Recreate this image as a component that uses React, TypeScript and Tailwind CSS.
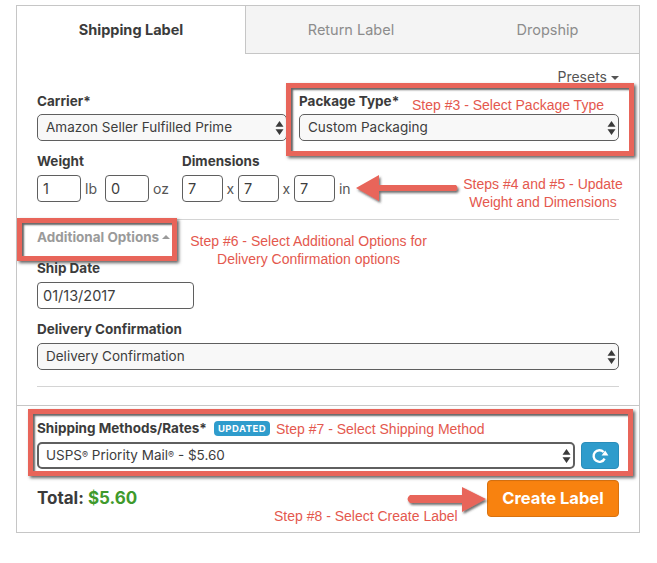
import React from "react";

const ui = "font-['Inter','Liberation_Sans',sans-serif]";

function Arrows() {
  return (
    <svg width="9" height="16" viewBox="0 0 9 16" className="shrink-0">
      <path d="M4.5 1 L8.5 6.8 H.5 Z M4.5 15 L.5 9.2 H8.5 Z" fill="#3a3a3a" />
    </svg>
  );
}

function Select({ children, className = "" }: { children: React.ReactNode; className?: string }) {
  return (
    <div className={`flex h-[27px] items-center justify-between rounded-[5px] border border-[#5f5f5f] bg-[#f8f8f8] pl-2 pr-[2px] text-[13.5px] text-[#3d3d3d] ${className}`}>
      <span>{children}</span>
      <Arrows />
    </div>
  );
}

function Field({ value, w }: { value: string; w: string }) {
  return (
    <div className={`flex h-[27px] items-center rounded-[4px] border border-[#5f5f5f] bg-white pl-[5px] text-[14.5px] text-[#3d3d3d] ${w}`}>
      {value}
    </div>
  );
}

function Label({ children, className = "" }: { children: React.ReactNode; className?: string }) {
  return <div className={`text-[13.5px] font-bold leading-[20px] text-[#3b3b3b] ${className}`}>{children}</div>;
}

function Note({ children, className = "" }: { children: React.ReactNode; className?: string }) {
  return (
    <div className={`absolute whitespace-nowrap font-['Liberation_Sans',sans-serif] text-[14px] leading-[18px] text-[#e4584e] ${className}`}>
      {children}
    </div>
  );
}

function Box({ className }: { className: string }) {
  return <div className={`absolute border-[5px] border-[#e8655a] shadow-[2px_2px_3px_rgba(50,50,50,0.75),inset_2px_2px_2px_rgba(50,50,50,0.75)] ${className}`} />;
}

export default function App() {
  return (
    <div className={`relative h-[563px] w-[657px] overflow-hidden bg-white pl-4 pt-[5px] ${ui}`}>
      <div className="h-[528px] w-[624px] border border-[#c6c6c6]">
        <div className="flex h-[48px] text-[14.5px]">
          <div className="flex w-[228px] items-center justify-center font-bold text-[#3b3b3b]">Shipping Label</div>
          <div className="flex flex-1 border-b border-l border-[#c6c6c6] bg-[#f4f4f4] text-[#8c8c8c]">
            <div className="flex w-[210px] items-center justify-center">Return Label</div>
            <div className="flex flex-1 items-center justify-center">Dropship</div>
          </div>
        </div>

        <div className="px-5">
          <div className="flex h-[33px] items-end justify-end gap-1 pb-[1px] text-[14px] leading-[18px] text-[#555]">
            Presets
            <span className="mb-[6px] h-0 w-0 border-x-[4px] border-t-[4px] border-x-transparent border-t-[#555]" />
          </div>

          <div className="mt-[4px] flex gap-3">
            <div className="w-[250px]">
              <Label className="mb-[3px]">Carrier*</Label>
              <Select>Amazon Seller Fulfilled Prime</Select>
            </div>
            <div className="flex-1">
              <Label className="mb-[3px]">Package Type*</Label>
              <Select>Custom Packaging</Select>
            </div>
          </div>

          <div className="mt-[10px] flex gap-[13px]">
            <div>
              <Label className="mb-1">Weight</Label>
              <div className="flex items-center text-[14px] text-[#555]">
                <Field value="1" w="w-[44px]" />
                <span className="ml-1 w-[20px]">lb</span>
                <Field value="0" w="w-[44px]" />
                <span className="ml-1">oz</span>
              </div>
            </div>
            <div>
              <Label className="mb-1">Dimensions</Label>
              <div className="flex items-center text-[14px] text-[#555]">
                <Field value="7" w="w-[41px]" />
                <span className="w-[15px] text-center">x</span>
                <Field value="7" w="w-[41px]" />
                <span className="w-[15px] text-center">x</span>
                <Field value="7" w="w-[41px]" />
                <span className="ml-1">in</span>
              </div>
            </div>
          </div>

          <div className="mt-[17px] h-px bg-[#d4d4d4]" />

          <div className="mt-[7px] flex items-center gap-[3px] text-[13.5px] font-bold leading-[20px] text-[#9a9a9a]">
            Additional Options
            <span className="h-0 w-0 border-x-[4px] border-b-[4px] border-x-transparent border-b-[#9a9a9a]" />
          </div>

          <Label className="mb-1 mt-[11px]">Ship Date</Label>
          <Field value="01/13/2017" w="w-[157px] pl-[4px]" />

          <Label className="mb-1 mt-[10px]">Delivery Confirmation</Label>
          <Select>Delivery Confirmation</Select>

          <div className="mt-[16px] h-px bg-[#d4d4d4]" />
        </div>

        <div className="mt-[18px] border-t border-[#c6c6c6] px-5 pt-[12px]">
          <div className="flex h-[20px] items-center">
            <Label>Shipping Methods/Rates*</Label>
            <span className="ml-[7px] rounded-[4px] bg-[#2f9ccc] px-1 text-[9.5px] font-bold leading-[15px] tracking-[0.5px] text-white">UPDATED</span>
          </div>
          <div className="mt-1 flex gap-[6px]">
            <Select className="flex-1 border-2 border-[#3a9cc9] bg-white pl-[7px]">
              USPS<span className="align-[2px] text-[9px]">®</span> Priority Mail<span className="align-[2px] text-[9px]">®</span> - $5.60
            </Select>
            <div className="flex h-[27px] w-[38px] items-center justify-center rounded-[4px] border border-[#2a8dba] bg-[#2f9ccc]">
              <svg width="18" height="16" viewBox="0 0 18 16" fill="none">
                <path d="M13.6 10.6A5.8 5.8 0 1 1 12.6 4" stroke="#fff" strokeWidth="2.4" />
                <path d="M17.4 7.6H10.6L14.2 2.6Z" fill="#fff" />
              </svg>
            </div>
          </div>
          <div className="mt-[11px] flex items-center justify-between">
            <div className="text-[17px] font-bold text-[#3b3b3b]">
              Total: <span className="text-[#3f9a2c]">$5.60</span>
            </div>
            <div className="flex h-[37px] w-[132px] items-center justify-center rounded-[4px] border border-[#d9720f] bg-[#f8820f] text-[16.5px] font-bold text-white">
              Create Label
            </div>
          </div>
        </div>
      </div>

      <Box className="left-[286px] top-[83px] h-[73px] w-[348px]" />
      <Box className="left-[17px] top-[218px] h-[43px] w-[160px]" />
      <Box className="left-[28px] top-[409px] h-[67px] w-[605px]" />

      <svg width="657" height="563" className="pointer-events-none absolute left-0 top-0">
        <defs>
          <filter id="s" x="-20%" y="-50%" width="140%" height="200%">
            <feDropShadow dx="1.5" dy="2" stdDeviation="1.2" floodColor="#333" floodOpacity="0.7" />
          </filter>
        </defs>
        <path d="M356 188 L379 175 V185 H456 Q459 188 456 191 H379 V201 Z" fill="#e8655a" filter="url(#s)" />
        <path d="M486 499 L462 487 V495 H410 Q405 499 410 503 H462 V512 Z" fill="#e8655a" filter="url(#s)" />
      </svg>

      <Note className="left-[412px] top-[96px]">Step #3 - Select Package Type</Note>
      <Note className="left-[443px] top-[175px] w-[200px] text-center">Steps #4 and #5 - Update<br />Weight and Dimensions</Note>
      <Note className="left-[190px] top-[232px] w-[237px] text-center">Step #6 - Select Additional Options for<br />Delivery Confirmation options</Note>
      <Note className="left-[276px] top-[420px]">Step #7 - Select Shipping Method</Note>
      <Note className="left-[274px] top-[507px]">Step #8 - Select Create Label</Note>
    </div>
  );
}
